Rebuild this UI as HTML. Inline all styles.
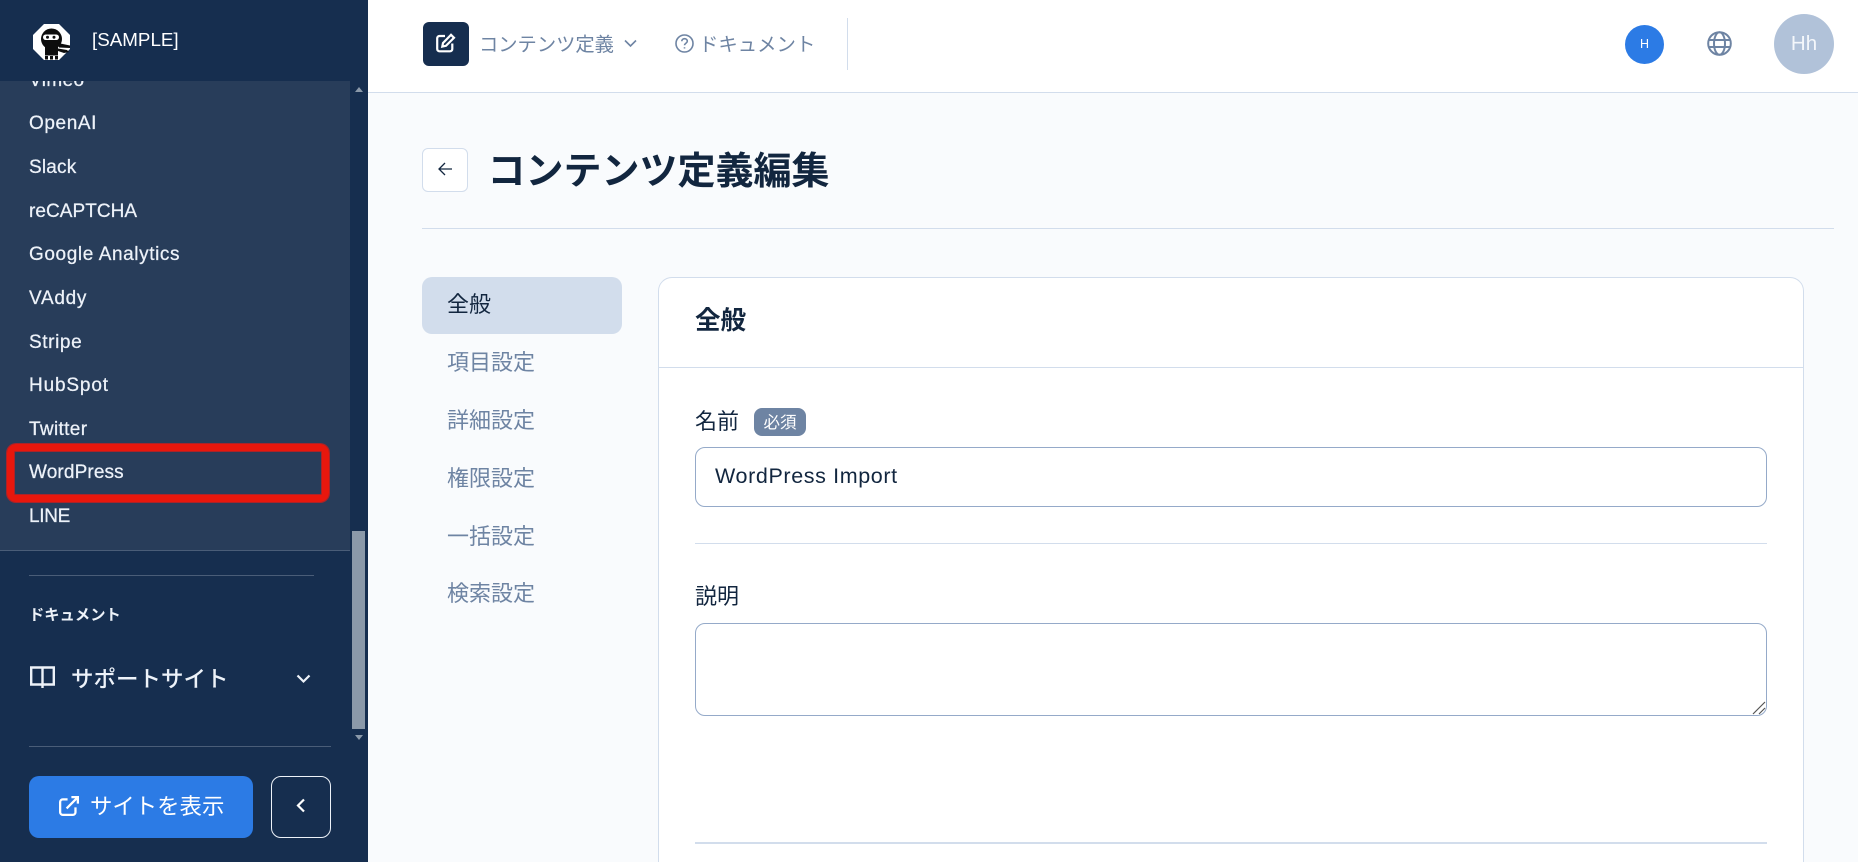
<!DOCTYPE html>
<html lang="ja"><head><meta charset="utf-8"><title>コンテンツ定義編集</title>
<style>
*{box-sizing:border-box;margin:0;padding:0}
html,body{width:1858px;height:862px;overflow:hidden;background:#f9fbfd}
body{position:relative;font-family:"Liberation Sans","Noto Sans CJK JP",sans-serif;color:#12263f}
.a{position:absolute}
.t{position:absolute;white-space:nowrap;line-height:30px;height:30px}
.jp{font-family:"Noto Sans CJK JP","Liberation Sans",sans-serif}
.si{left:29px;color:#edf2f9;font-size:19px;-webkit-text-stroke:.25px #edf2f9}
.nv{left:447px;font-size:22px;color:#6e84a3}
svg{position:absolute;display:block;overflow:visible}
</style></head><body>
<!-- sidebar -->
<div class="a" style="left:0;top:0;width:368px;height:862px;background:#162e4f"></div>
<div class="a" style="left:0;top:81px;width:350px;height:470px;background:#283d5a;border-bottom:1px solid #4a5d78"></div>
<div class="t si" style="top:66px;letter-spacing:.4px">Vimeo</div>
<div class="t si" style="top:109px;letter-spacing:.6px">OpenAI</div>
<div class="t si" style="top:153px;letter-spacing:.2px">Slack</div>
<div class="t si" style="top:197px;letter-spacing:.05px">reCAPTCHA</div>
<div class="t si" style="top:240px;letter-spacing:.6px">Google Analytics</div>
<div class="t si" style="top:284px;letter-spacing:.7px">VAddy</div>
<div class="t si" style="top:328px;letter-spacing:.6px">Stripe</div>
<div class="t si" style="top:371px;letter-spacing:.85px">HubSpot</div>
<div class="t si" style="top:415px;letter-spacing:.35px">Twitter</div>
<div class="t si" style="top:458px;letter-spacing:.13px">WordPress</div>
<div class="t si" style="top:502px;letter-spacing:-.3px">LINE</div>
<div class="a" style="left:7px;top:444px;width:322px;height:58px;border:7.500px solid #e8170d;border-radius:9px;box-shadow:0 0 0 1px #a8242a,inset 0 0 0 1px #a8242a"></div>
<div class="a" style="left:0;top:0;width:368px;height:81px;background:#162e4f"></div>
<svg style="left:33px;top:24px" width="37" height="36" viewBox="0 0 37 36">
<path d="M11 0H26L37 11V25L26 36H11L0 25V11Z" fill="#fff"/>
<circle cx="18.500" cy="15" r="10.500" fill="#0d0d0d"/>
<rect x="10" y="10.500" width="16" height="5.500" rx="2.700" fill="#fff"/>
<circle cx="14.500" cy="13.200" r="1.500" fill="#111"/><circle cx="21" cy="13.200" r="1.500" fill="#111"/>
<path d="M12 23H25V31.500H12Z" fill="#0d0d0d"/>
<path d="M12 32h3v3.500h-3zM17 32h3v3.500h-3zM22 32h3v3.500h-3z" fill="#0d0d0d"/>
<path d="M25 19L37 21.500V24L26 23.500ZM25 24.500L34 26L36 28L31 29L25 27Z" fill="#0d0d0d"/>
</svg>
<div class="t" style="left:92px;top:25px;font-size:18.800px;color:#fff">[SAMPLE]</div>
<!-- scrollbar -->
<div class="a" style="left:352px;top:531px;width:13px;height:198px;background:#8b99a9"></div>
<div class="a" style="left:355px;top:87px;width:0;height:0;border-left:4px solid transparent;border-right:4px solid transparent;border-bottom:5px solid #8b99a9"></div>
<div class="a" style="left:355px;top:735px;width:0;height:0;border-left:4px solid transparent;border-right:4px solid transparent;border-top:5px solid #8b99a9"></div>
<div class="a" style="left:29px;top:575px;width:285px;height:1px;background:#4a5d78"></div>
<div class="t jp" style="left:29px;top:599px;font-size:15.300px;font-weight:700;color:#edf2f9">ドキュメント</div>
<svg style="left:30px;top:666px" width="25" height="23" viewBox="0 0 25 23" fill="none" stroke="#edf2f9" stroke-width="2.400"><path d="M12.500 2.500V22M1.200 1.500H12.500H23.800V18.500H1.200Z"/></svg>
<div class="t jp" style="left:71px;top:663px;font-size:22.500px;font-weight:500;color:#edf2f9">サポートサイト</div>
<svg style="left:296px;top:674px" width="15" height="10" viewBox="0 0 15 10" fill="none" stroke="#edf2f9" stroke-width="2.200"><path d="M1.500 1.500L7.500 7.500L13.500 1.500"/></svg>
<div class="a" style="left:29px;top:746px;width:302px;height:1px;background:#4a5d78"></div>
<div class="a" style="left:29px;top:776px;width:224px;height:62px;background:#2c7be5;border-radius:10px"></div>
<svg style="left:59px;top:796px" width="20" height="20" viewBox="0 0 21 21" fill="none" stroke="#fff" stroke-width="2.400"><path d="M9 3.500H4C2.500 3.500 1.200 4.800 1.200 6.300V17C1.200 18.500 2.500 19.800 4 19.800H14.500C16 19.800 17.300 18.500 17.300 17V12M8 13L19.500 1.500M13 1.200H19.800V8"/></svg>
<div class="t jp" style="left:90px;top:790px;font-size:22.400px;color:#fff">サイトを表示</div>
<div class="a" style="left:271px;top:776px;width:60px;height:62px;border:1px solid #edf2f9;border-radius:10px"></div>
<svg style="left:296px;top:798px" width="10" height="16" viewBox="0 0 10 16" fill="none" stroke="#fff" stroke-width="2.200"><path d="M8 1.500L2 7.500L8 13.500"/></svg>
<!-- topbar -->
<div class="a" style="left:368px;top:0;width:1490px;height:93px;background:#fff;border-bottom:1.500px solid #d2ddec"></div>
<div class="a" style="left:423px;top:22px;width:46px;height:44px;background:#162e4f;border-radius:6px"></div>
<svg style="left:436px;top:33px" width="20" height="20" viewBox="0 0 20 20" fill="none" stroke="#fff" stroke-width="2.200"><path d="M9 3H3.500C2.200 3 1.200 4 1.200 5.300V16C1.200 17.300 2.200 18.300 3.500 18.300H14C15.300 18.300 16.300 17.300 16.300 16V10.500"/><path d="M15 1.800L18 4.800L10 12.800L6.300 13.600L7 10Z"/></svg>
<div class="t jp" style="left:479px;top:27.500px;font-size:19.300px;color:#6e84a3">コンテンツ定義</div>
<svg style="left:624px;top:39px" width="13" height="9" viewBox="0 0 13 9" fill="none" stroke="#6e84a3" stroke-width="1.600"><path d="M1 1.500L6.500 7L12 1.500"/></svg>
<svg style="left:675px;top:33.500px" width="19" height="19" viewBox="0 0 19 19" fill="none" stroke="#6e84a3" stroke-width="1.600"><circle cx="9.500" cy="9.500" r="8.500"/><path d="M6.800 7.300C6.800 3.800 12.300 3.900 12.300 7.200C12.300 9 9.500 9.400 9.500 11.200M9.500 13.300V14.500"/></svg>
<div class="t jp" style="left:699px;top:27.500px;font-size:19.400px;color:#6e84a3">ドキュメント</div>
<div class="a" style="left:847px;top:18px;width:1px;height:52px;background:#d2ddec"></div>
<div class="a" style="left:1625px;top:25px;width:39px;height:39px;border-radius:50%;background:#2c7be5;color:#fff;font-size:12.500px;line-height:38px;text-align:center">H</div>
<svg style="left:1707px;top:30.500px" width="25" height="25" viewBox="0 0 25 25" fill="none" stroke="#6e84a3" stroke-width="2"><circle cx="12.500" cy="12.500" r="11.300"/><ellipse cx="12.500" cy="12.500" rx="5.500" ry="11.300"/><path d="M1.500 9H23.500M1.500 16H23.500"/></svg>
<div class="a" style="left:1774px;top:14px;width:60px;height:60px;border-radius:50%;background:#b1c2d9;color:#f4f7fb;font-size:20.500px;line-height:60px;text-align:center">Hh</div>
<!-- title -->
<div class="a" style="left:422px;top:148px;width:46px;height:44px;background:#fff;border:1px solid #d2ddec;border-radius:6px"></div>
<svg style="left:438px;top:162px" width="15" height="14" viewBox="0 0 15 14" fill="none" stroke="#12263f" stroke-width="1.300"><path d="M14 7H1M7 1L1 7L7 13"/></svg>
<div class="t jp" style="left:487.500px;top:138px;height:60px;line-height:60px;font-size:38px;font-weight:700;color:#12263f">コンテンツ定義編集</div>
<div class="a" style="left:422px;top:228px;width:1412px;height:1px;background:#d2ddec"></div>
<!-- left nav -->
<div class="a" style="left:422px;top:277px;width:200px;height:57px;background:#d2ddec;border-radius:10px"></div>
<div class="t nv jp" style="top:288px;color:#12263f">全般</div>
<div class="t nv jp" style="top:346px">項目設定</div>
<div class="t nv jp" style="top:404px">詳細設定</div>
<div class="t nv jp" style="top:462px">権限設定</div>
<div class="t nv jp" style="top:520px">一括設定</div>
<div class="t nv jp" style="top:577px">検索設定</div>
<!-- card -->
<div class="a" style="left:658px;top:277px;width:1146px;height:620px;background:#fff;border:1px solid #d2ddec;border-radius:14px"></div>
<div class="a" style="left:659px;top:367px;width:1144px;height:1px;background:#d2ddec"></div>
<div class="t jp" style="left:695px;top:304px;font-size:25.500px;font-weight:700;color:#12263f">全般</div>
<div class="t jp" style="left:695px;top:405px;font-size:22px;color:#12263f">名前</div>
<div class="a jp" style="left:754px;top:408px;width:52px;height:28px;background:#6e84a3;border-radius:8px;color:#fff;font-size:16.500px;line-height:27px;text-align:center">必須</div>
<div class="a" style="left:695px;top:447px;width:1072px;height:60px;background:#fff;border:1px solid #95aac9;border-radius:10px"></div>
<div class="t" style="left:715px;top:461px;font-size:21.500px;letter-spacing:.62px;color:#12263f">WordPress Import</div>
<div class="a" style="left:695px;top:543px;width:1072px;height:1px;background:#d2ddec"></div>
<div class="t jp" style="left:695px;top:580px;font-size:22px;color:#12263f">説明</div>
<div class="a" style="left:695px;top:623px;width:1072px;height:93px;background:#fff;border:1px solid #95aac9;border-radius:10px"></div>
<svg style="left:1752px;top:701px" width="14" height="14" viewBox="0 0 14 14" fill="none" stroke="#555" stroke-width="1.200"><path d="M1 13L13 1M7 13L13 7"/></svg>
<div class="a" style="left:695px;top:842px;width:1072px;height:2px;background:#d2ddec"></div>
</body></html>
